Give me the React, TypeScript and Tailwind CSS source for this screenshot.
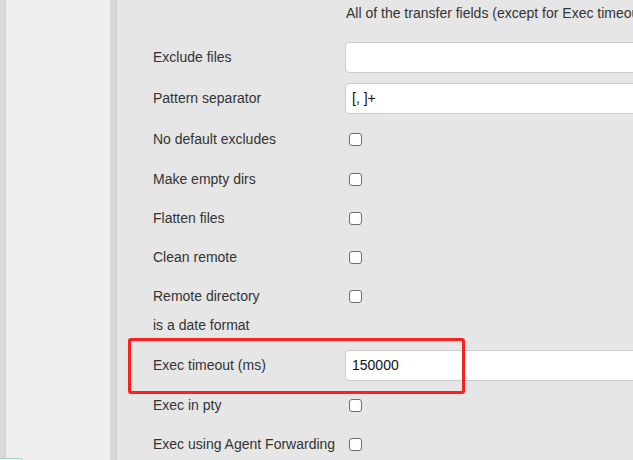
import React from "react";

type Row =
  | { kind: "input"; label: string; value: string; h: string }
  | { kind: "check"; label: string; h: string };

const rows: Row[] = [
  { kind: "input", label: "Exclude files", value: "", h: "h-[41px]" },
  { kind: "input", label: "Pattern separator", value: "[, ]+", h: "h-[41px]" },
  { kind: "check", label: "No default excludes", h: "h-[41px]" },
  { kind: "check", label: "Make empty dirs", h: "h-[39px]" },
  { kind: "check", label: "Flatten files", h: "h-[39px]" },
  { kind: "check", label: "Clean remote", h: "h-[39px]" },
];

function Checkbox() {
  return (
    <span className="ml-[4px] inline-block w-[13px] h-[13px] rounded-[3px] border border-[#6e6e6e] bg-white" />
  );
}

function TextField({ value }: { value: string }) {
  return (
    <div className="h-[31px] w-[320px] shrink-0 flex items-center rounded-[4px] border border-[#cccccc] bg-white px-[6px] text-[#111]">
      {value}
    </div>
  );
}

export default function App() {
  return (
    <div
      className="flex w-[633px] h-[460px] overflow-hidden text-[14px] text-[#333]"
      style={{ fontFamily: '"Liberation Sans", Arial, sans-serif' }}
    >
      {/* sidebar */}
      <div className="flex w-[110px] shrink-0 bg-[#eeeeee]">
        <div className="w-[5px] bg-[#d9d9d9]" />
        <div className="w-[1px] bg-[#d2d2d2]" />
        <div className="flex-1 flex flex-col justify-end">
          <div className="h-[2px] w-[22px] -ml-[6px] rounded-tr-[4px] border-t border-r border-[#9fd6bb] bg-white" />
        </div>
      </div>
      <div className="w-[6px] shrink-0 bg-[#d6d6d6]" />
      <div className="w-[1px] shrink-0 bg-[#cfcfcf]" />

      {/* main panel */}
      <div className="flex-1 min-w-0 bg-[#e6e6e6] pl-[36px]">
        <div className="h-[37px] pt-[3px] pl-[193px] leading-[20px] whitespace-nowrap">
          All of the transfer fields (except for Exec timeout and Exec in pty) support substitution of Jenkins environment variables
        </div>

        {rows.map((r) => (
          <div key={r.label} className={`flex items-center ${r.h}`}>
            <div className="w-[192px] shrink-0">{r.label}</div>
            {r.kind === "input" ? <TextField value={r.value} /> : <Checkbox />}
          </div>
        ))}

        <div className="flex items-start h-[68px] pt-[5px] leading-[29px]">
          <div className="w-[192px] shrink-0">
            Remote directory
            <br />
            is a date format
          </div>
          <div className="h-[29px] flex items-center">
            <Checkbox />
          </div>
        </div>

        <div className="relative flex items-center h-[40px]">
          <div className="w-[192px] shrink-0">Exec timeout (ms)</div>
          <TextField value="150000" />
          <div className="absolute -left-[25px] -top-[7px] w-[337px] h-[56px] rounded-[3px] border-[3px] border-[#ff1f1f]" />
        </div>

        <div className="flex items-center h-[40px]">
          <div className="w-[192px] shrink-0">Exec in pty</div>
          <Checkbox />
        </div>
        <div className="flex items-center h-[39px]">
          <div className="w-[192px] shrink-0">Exec using Agent Forwarding</div>
          <Checkbox />
        </div>
      </div>
    </div>
  );
}
